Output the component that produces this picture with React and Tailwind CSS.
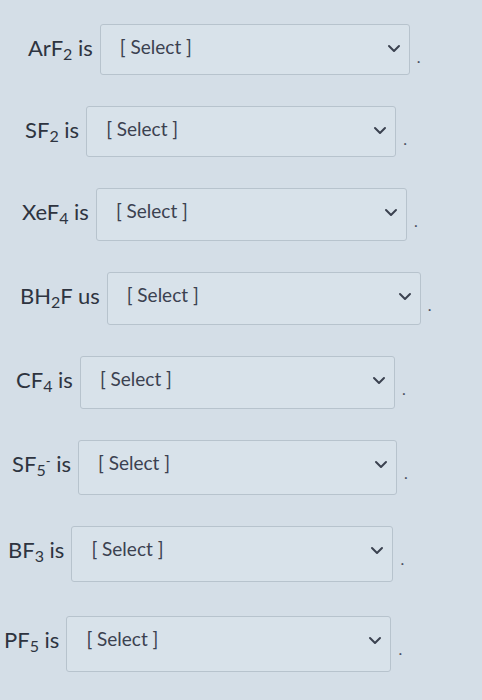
import { useState } from "react";

const Sub = ({ children }) => <sub className="text-[16px]">{children}</sub>;

// the photo is a little skewed, so each row sits a few px further left
const rows = [
    { id: "arf2", label: <>ArF<Sub>2</Sub> is</>, indent: "pl-[28px]", box: "w-[310px] h-[51px]" },
    { id: "sf2", label: <>SF<Sub>2</Sub> is</>, indent: "pl-[25px]", box: "w-[310px] h-[51px]" },
    { id: "xef4", label: <>XeF<Sub>4</Sub> is</>, indent: "pl-[22px]", box: "w-[311px] h-[53px]" },
    { id: "bh2f", label: <>BH<Sub>2</Sub>F us</>, indent: "pl-[20px]", box: "w-[314px] h-[53px]" },
    { id: "cf4", label: <>CF<Sub>4</Sub> is</>, indent: "pl-[16px]", box: "w-[315px] h-[53px]" },
    {
        id: "sf5",
        label: <>SF<Sub>5</Sub><sup className="text-[13px]">-</sup> is</>,
        indent: "pl-[12px]",
        box: "w-[319px] h-[55px]",
    },
    { id: "bf3", label: <>BF<Sub>3</Sub> is</>, indent: "pl-[8px]", box: "w-[322px] h-[56px]" },
    { id: "pf5", label: <>PF<Sub>5</Sub> is</>, indent: "pl-[4px] mt-[3px]", box: "w-[325px] h-[56px]" },
];

const Chevron = () => (
    <svg width="14" height="9" viewBox="0 0 14 9" fill="none">
        <path d="M2 2 L7 7 L12 2" stroke="#3b4250" strokeWidth="2" strokeLinecap="round" strokeLinejoin="round" />
    </svg>
);

const SelectBox = ({ className, value, onClick }) => {
    return (
        <div
            className={`${className} ml-[7px] flex items-start justify-between rounded-[3px] border border-[#b7c3cd] bg-[#d8e2ea] pl-[19px] pr-[8px] pt-[9px] cursor-pointer`}
            onClick={onClick}
        >
            <span className="text-[19px] leading-[26px] text-[#3b4150]">{value || "[ Select ]"}</span>
            <span className="mt-[10px]">
                <Chevron />
            </span>
        </div>
    );
};

export default function App() {
    const [values] = useState({});

    return (
        <div className="w-[482px] h-[700px] overflow-hidden bg-[#d4dee7] pt-[24px] flex flex-col gap-[31px] font-['Lato','Open_Sans',sans-serif] text-[#2e3440]">
            {rows.map((row) => (
                <div key={row.id} className={`${row.indent} flex items-start`}>
                    <div className="text-[22px] leading-[26px] pt-[11px] whitespace-nowrap">{row.label}</div>
                    <SelectBox className={row.box} value={values[row.id]} />
                    <span className="ml-[7px] mt-[25px] text-[16px] leading-[16px] text-[#4a5060]">.</span>
                </div>
            ))}
        </div>
    );
}
